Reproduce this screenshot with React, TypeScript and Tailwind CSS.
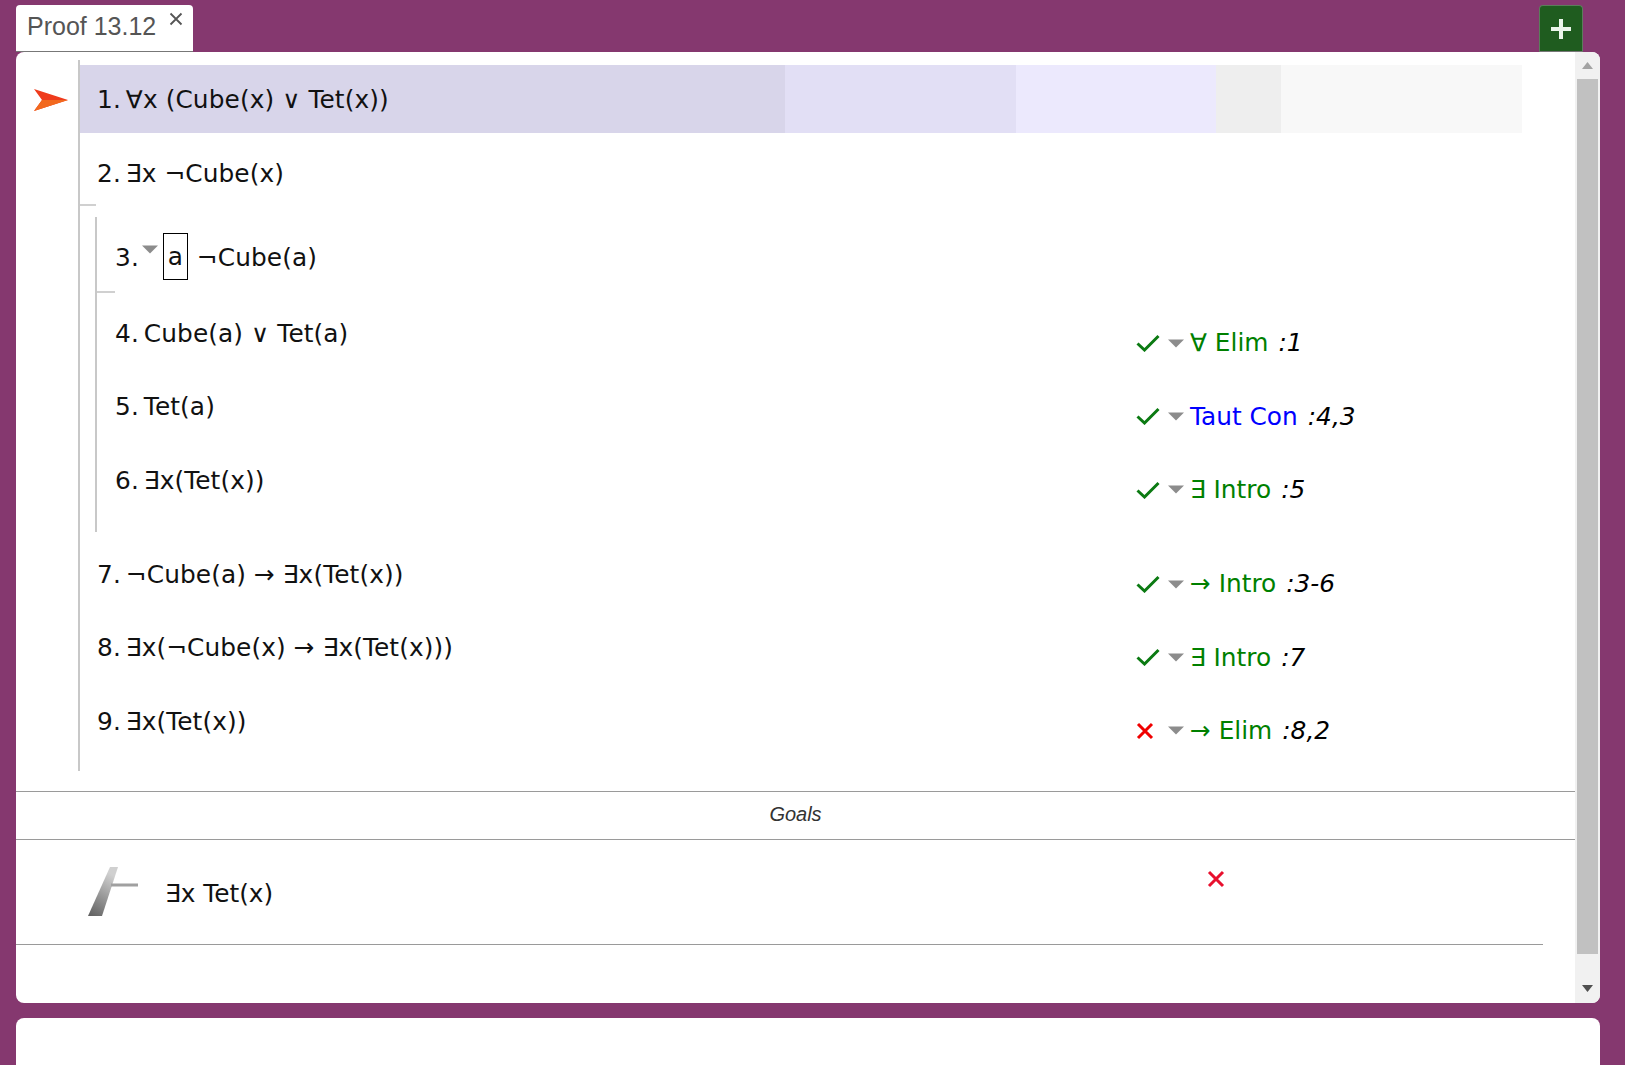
import { Fragment } from "react";

type Just = { ok: boolean; rule: string; color: string; refs: string };
type Line = { n: number; text: string; just?: Just };

const green = "text-[#008000]";
const blue = "text-[#0000ff]";

const sub: Line[] = [
  { n: 4, text: "Cube(a) ∨ Tet(a)", just: { ok: true, rule: "∀ Elim", color: green, refs: ":1" } },
  { n: 5, text: "Tet(a)", just: { ok: true, rule: "Taut Con", color: blue, refs: ":4,3" } },
  { n: 6, text: "∃x(Tet(x))", just: { ok: true, rule: "∃ Intro", color: green, refs: ":5" } },
];

const after: Line[] = [
  { n: 7, text: "¬Cube(a) → ∃x(Tet(x))", just: { ok: true, rule: "→ Intro", color: green, refs: ":3-6" } },
  { n: 8, text: "∃x(¬Cube(x) → ∃x(Tet(x)))", just: { ok: true, rule: "∃ Intro", color: green, refs: ":7" } },
  { n: 9, text: "∃x(Tet(x))", just: { ok: false, rule: "→ Elim", color: green, refs: ":8,2" } },
];

function Caret({ className = "" }: { className?: string }) {
  return (
    <svg width="16" height="9" viewBox="0 0 16 9" className={className}>
      <path d="M0 0.5 H16 L8 8.5 Z" fill="#8c8c8c" />
    </svg>
  );
}

function Cross({ size = 18, color = "#f00000" }: { size?: number; color?: string }) {
  return (
    <svg width={size} height={size} viewBox="0 0 18 18">
      <path d="M2 2 L16 16 M16 2 L2 16" stroke={color} strokeWidth="3" fill="none" />
    </svg>
  );
}

function Num({ n }: { n: number }) {
  return <span className="mr-[-3px]">{n}. </span>;
}

function Justification({ just }: { just: Just }) {
  return (
    <div className="flex items-center h-[30px]">
      <div className="w-[28px]">
        {just.ok ? (
          <svg width="24" height="18" viewBox="0 0 24 18">
            <path d="M1.5 9.5 L8.5 16 L22.5 2" stroke="#0b7a12" strokeWidth="3" fill="none" />
          </svg>
        ) : (
          <Cross size={18} />
        )}
      </div>
      <Caret className="ml-[4px] mr-[6px]" />
      <span className={just.color}>{just.rule}</span>
      <span className="italic ml-[10px] text-black">{just.refs}</span>
    </div>
  );
}

function Row({ line, indent }: { line: Line; indent: string }) {
  return (
    <div className={`flex justify-between h-[73.4px] ${indent}`}>
      <div className="pt-[18px] leading-[30px] tracking-[0.1px]">
        <Num n={line.n} />
        {line.text}
      </div>
      {line.just && (
        <div className="w-[439px] pt-[27px]">
          <Justification just={line.just} />
        </div>
      )}
    </div>
  );
}

export default function App() {
  return (
    <div className="w-[1625px] h-[1065px] overflow-hidden bg-[#85386f] font-['DejaVu_Sans',sans-serif] text-[24.8px] text-[#111]">
      {/* Tabs */}
      <div className="h-[52px] flex justify-between items-start pl-4 pr-[42px] pt-[5px]">
        <div className="relative w-[177px] h-[47px] bg-white border-b border-[#777] rounded-t-[4px] pl-[11px] pt-[7px] font-['Liberation_Sans',sans-serif] text-[25px] leading-[29px] text-[#555]">
          Proof 13.12
          <svg width="14" height="14" viewBox="0 0 14 14" className="absolute right-[10px] top-[7px]">
            <path d="M1.5 1.5 L12.5 12.5 M12.5 1.5 L1.5 12.5" stroke="#555" strokeWidth="1.8" fill="none" />
          </svg>
        </div>
        <button className="w-[44px] h-[47px] bg-[#1f5c1f] border border-[#5b7d5b] border-b-[#777] rounded-t-[4px] flex items-center justify-center">
          <svg width="22" height="22" viewBox="0 0 22 22">
            <path d="M11 1 V21 M1 11 H21" stroke="#eaf5ea" strokeWidth="4" fill="none" />
          </svg>
        </button>
      </div>

      {/* Proof panel */}
      <div className="ml-4 w-[1584px] h-[951px] bg-white rounded-[8px] overflow-hidden flex">
        <div className="w-[1559px] flex flex-col">
          <div className="flex h-[739px]">
            <div className="w-[62px] pt-[36px] pl-[18px]">
              <svg width="34" height="24" viewBox="0 0 34 24">
                <path d="M0 1 L34 12 L0 23 L8 12 Z" fill="#ef3b1c" />
                <path d="M8 12 L34 12 L0 23 Z" fill="#f2691e" />
              </svg>
            </div>
            <div className="flex-1 mt-[8px] h-[711px] border-l-2 border-[#c8c8c8]">
              <div className="mt-[5px] h-[68px] w-[1442px] pl-[17px] pt-[20px] leading-[30px] tracking-[0.1px] bg-[linear-gradient(90deg,#d8d5ea_0,#d8d5ea_705px,#e2dff5_705px,#e2dff5_936px,#ece9fd_936px,#ece9fd_1136px,#eeeeee_1136px,#eeeeee_1201px,#f8f8f8_1201px,#f8f8f8_1442px)]">
                <Num n={1} />∀x (Cube(x) ∨ Tet(x))
              </div>
              <div className="h-[71px] pl-[17px] pt-[26px] leading-[30px] tracking-[0.1px]">
                <Num n={2} />∃x ¬Cube(x)
              </div>
              <div className="w-[16px] border-t-2 border-[#d0d0d0]" />

              {/* Subproof */}
              <div className="ml-[15px] mt-[11px] h-[315px] border-l-2 border-[#c8c8c8]">
                <div className="h-[76px] pl-[18px] pt-[16px] flex items-start leading-[30px] tracking-[0.1px]">
                  <span className="pt-[10px]">3.</span>
                  <Caret className="mt-[12px] ml-[3px]" />
                  <span className="ml-[5px] w-[25px] h-[47px] border border-black flex items-center justify-center">a</span>
                  <span className="ml-[9px] pt-[10px]">¬Cube(a)</span>
                </div>
                <div className="w-[18px] border-t-2 border-[#d0d0d0] -mt-[2px]" />
                <div className="pt-[8px]">
                  {sub.map((l) => (
                    <Fragment key={l.n}>
                      <Row line={l} indent="pl-[18px]" />
                    </Fragment>
                  ))}
                </div>
              </div>

              <div className="mt-[10px]">
                {after.map((l) => (
                  <Row key={l.n} line={l} indent="pl-[17px]" />
                ))}
              </div>
            </div>
          </div>

          {/* Goals */}
          <div className="h-[49px] pb-[3px] border-y border-[#9a9a9a] flex items-center justify-center font-['Liberation_Sans',sans-serif] italic text-[20px] text-[#333]">
            Goals
          </div>
          <div className="relative h-[105px] w-[1527px] border-b border-[#9a9a9a] flex items-center pl-[72px]">
            <svg width="52" height="50" viewBox="0 0 52 50">
              <defs>
                <linearGradient id="tsBar" x1="0" y1="1" x2="0.4" y2="0">
                  <stop offset="0" stopColor="#5e5e5e" />
                  <stop offset="1" stopColor="#d0d0d0" />
                </linearGradient>
              </defs>
              <path d="M0 49 H14 L30 0 H22 Z" fill="url(#tsBar)" />
              <path d="M23 18 H50" stroke="#a0a0a0" strokeWidth="3" fill="none" />
            </svg>
            <span className="ml-[25px] mt-[4px]">∃x Tet(x)</span>
            <div className="absolute left-[1191px] top-[30px]">
              <Cross size={18} color="#e8102e" />
            </div>
          </div>
        </div>

        {/* Scrollbar */}
        <div className="w-[25px] bg-[#f1f1f1] flex flex-col items-center">
          <div className="h-[27px] flex items-center justify-center">
            <svg width="11" height="7" viewBox="0 0 11 7">
              <path d="M0 7 H11 L5.5 0 Z" fill="#a3a3a3" />
            </svg>
          </div>
          <div className="w-[21px] h-[875px] bg-[#c1c1c1]" />
          <div className="flex-1 flex items-end justify-center pb-[11px]">
            <svg width="11" height="7" viewBox="0 0 11 7">
              <path d="M0 0 H11 L5.5 7 Z" fill="#505050" />
            </svg>
          </div>
        </div>
      </div>

      {/* Lower panel */}
      <div className="ml-4 w-[1584px] mt-[15px] h-[60px] bg-white rounded-t-[8px]" />
    </div>
  );
}
